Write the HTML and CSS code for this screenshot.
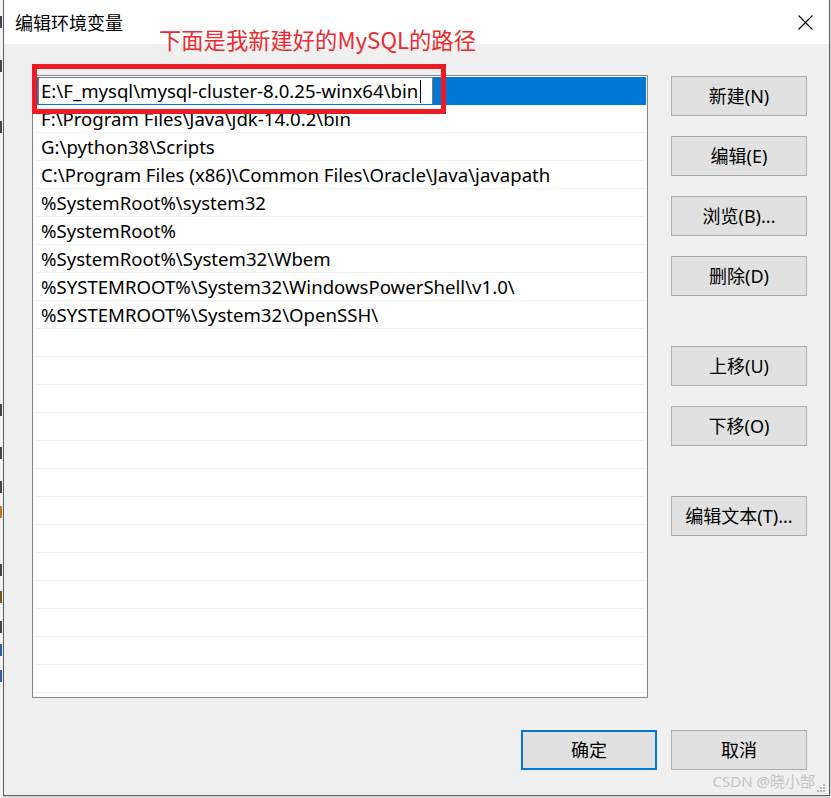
FILE: index.html
```html
<!DOCTYPE html>
<html lang="zh-CN">
<head>
<meta charset="utf-8">
<title>编辑环境变量</title>
<link rel="stylesheet" href="styles.css">
</head>
<body>
<div class="screen">
  <div class="behind">
    <span class="frag f1"></span>
    <span class="frag f2"></span>
    <span class="frag f3"></span>
    <span class="frag f4"></span>
    <span class="frag f5"></span>
    <span class="frag f6"></span>
    <span class="frag f7 orange"></span>
    <span class="frag f8"></span>
    <span class="frag f9 brown"></span>
    <span class="frag f10"></span>
    <span class="frag f11 blue"></span>
    <span class="frag f12 blue"></span>
  </div>
  <div class="dialog">
    <div class="titlebar">
      <span class="title">编辑环境变量</span>
      <svg class="close" width="15" height="15" viewBox="0 0 15 15"><path d="M0.5 0.5 L14.5 14.5 M14.5 0.5 L0.5 14.5" stroke="#000" stroke-width="1.1" fill="none"/></svg>
    </div>
    <div class="content">
      <div class="main">
        <div class="list">
          <div class="row selected"><div class="editbox"><span>E:\F_mysql\mysql-cluster-8.0.25-winx64\bin</span><span class="caret"></span></div></div>
          <div class="row">F:\Program Files\Java\jdk-14.0.2\bin</div>
          <div class="row">G:\python38\Scripts</div>
          <div class="row">C:\Program Files (x86)\Common Files\Oracle\Java\javapath</div>
          <div class="row">%SystemRoot%\system32</div>
          <div class="row">%SystemRoot%</div>
          <div class="row">%SystemRoot%\System32\Wbem</div>
          <div class="row">%SYSTEMROOT%\System32\WindowsPowerShell\v1.0\</div>
          <div class="row">%SYSTEMROOT%\System32\OpenSSH\</div>
          <div class="row"></div><div class="row"></div><div class="row"></div><div class="row"></div>
          <div class="row"></div><div class="row"></div><div class="row"></div><div class="row"></div>
          <div class="row"></div><div class="row"></div><div class="row"></div><div class="row"></div>
          <div class="row"></div><div class="row"></div>
        </div>
        <div class="buttons">
          <button class="btn">新建(N)</button>
          <button class="btn">编辑(E)</button>
          <button class="btn">浏览(B)...</button>
          <button class="btn">删除(D)</button>
          <button class="btn group">上移(U)</button>
          <button class="btn">下移(O)</button>
          <button class="btn group">编辑文本(T)...</button>
        </div>
      </div>
      <div class="footer">
        <button class="btn default">确定</button>
        <button class="btn">取消</button>
      </div>
      <div class="status">
        <span class="watermark">CSDN @晓小郜</span>
        <svg class="grip" width="9" height="9" viewBox="0 0 9 9">
          <rect x="6" y="0" width="2" height="2" fill="#b4b4b4"/>
          <rect x="3" y="3" width="2" height="2" fill="#b4b4b4"/>
          <rect x="6" y="3" width="2" height="2" fill="#b4b4b4"/>
          <rect x="0" y="6" width="2" height="2" fill="#b4b4b4"/>
          <rect x="3" y="6" width="2" height="2" fill="#b4b4b4"/>
          <rect x="6" y="6" width="2" height="2" fill="#b4b4b4"/>
        </svg>
      </div>
    </div>
  </div>
  <div class="annot-text">下面是我新建好的MySQL的路径</div>
  <div class="annot-box"></div>
</div>
</body>
</html>
```
FILE: styles.css
```css
* { box-sizing: border-box; }
html, body { margin: 0; padding: 0; }
body {
  width: 831px;
  height: 798px;
  overflow: hidden;
  background: #d6d6d6;
  font-family: "Noto Sans", "Noto Sans CJK SC", sans-serif;
  color: #000;
}
.screen {
  position: relative;
  display: flex;
  width: 831px;
  height: 798px;
}
.behind {
  position: relative;
  width: 3px;
  height: 798px;
  overflow: hidden;
  background: #f3f3f3;
  flex: none;
}
.frag {
  position: absolute;
  left: 0;
  width: 2px;
  height: 12px;
  background: #444;
}
.frag.orange { background: #c0781e; }
.frag.brown { background: #7a5520; }
.frag.blue { background: #2a5db0; }
.f1 { top: 16px; } .f2 { top: 60px; } .f3 { top: 121px; }
.f4 { top: 404px; } .f5 { top: 447px; } .f6 { top: 481px; }
.f7 { top: 506px; } .f8 { top: 564px; } .f9 { top: 591px; }
.f10 { top: 621px; } .f11 { top: 644px; } .f12 { top: 670px; }

.dialog {
  width: 827px;
  height: 796px;
  border: 1px solid #5c5c5c;
  border-top: none;
  background: #f0f0f0;
  display: flex;
  flex-direction: column;
  flex: none;
}
.titlebar {
  height: 44px;
  background: #fff;
  display: flex;
  align-items: center;
  justify-content: space-between;
  padding: 0 16px 0 11px;
  flex: none;
}
.title {
  font-family: "Noto Sans CJK SC", sans-serif;
  font-size: 18px;
  line-height: 20px;
  margin-top: -1px;
}
.close { display: block; }

.content {
  flex: 1;
  display: flex;
  flex-direction: column;
  padding: 31px 22px 0 28px;
}
.main {
  display: flex;
  gap: 23px;
}
.list {
  width: 616px;
  height: 623px;
  border: 1px solid #828790;
  background: #fff;
  padding: 1px 1px 0 1px;
  overflow: hidden;
}
.row {
  height: 28px;
  border-bottom: 1px solid #f0f0f0;
  margin: 0 1px;
  padding-left: 6px;
  padding-top: 1px;
  font-size: 18.6px;
  line-height: 26px;
  white-space: nowrap;
  overflow: hidden;
}
.row.selected {
  background: #0078d7;
  border-bottom-color: #0078d7;
  margin: 0;
  padding-left: 4px;
  padding-top: 0;
}
.editbox {
  width: 395px;
  height: 28px;
  background: #fff;
  border: 1px solid #7a7a7a;
  padding-left: 2px;
  display: flex;
  align-items: center;
  line-height: 26px;
}
.caret {
  display: inline-block;
  width: 1px;
  height: 23px;
  background: #000;
  margin-left: 2px;
}
.buttons {
  display: flex;
  flex-direction: column;
  gap: 20px;
  padding-top: 1px;
}
.btn {
  width: 136px;
  height: 40px;
  background: #e1e1e1;
  border: 1px solid #adadad;
  font-family: "Noto Sans", "Noto Sans CJK SC", sans-serif;
  font-size: 18px;
  color: #000;
  padding: 0;
  line-height: 20px;
}
.btn.group { margin-top: 30px; }
.btn.default { border: 2px solid #0078d7; }
.footer {
  display: flex;
  justify-content: flex-end;
  gap: 14px;
  margin-top: 32px;
}
.status {
  flex: 1;
  display: flex;
  justify-content: flex-end;
  align-items: flex-end;
  padding-bottom: 2px;
  margin-right: -19px;
}
.watermark {
  font-family: "Noto Sans", "Noto Sans CJK SC", sans-serif;
  font-size: 15px;
  line-height: 18px;
  color: #c4c4c4;
  margin-bottom: 3px;
  margin-right: 2px;
}
.grip { display: block; }

.annot-text {
  position: absolute;
  left: 159px;
  top: 24px;
  font-family: "Noto Sans CJK SC", sans-serif;
  font-size: 22.3px;
  line-height: 30px;
  color: #ee2a2f;
  white-space: nowrap;
}
.annot-box {
  position: absolute;
  left: 32px;
  top: 64px;
  width: 414px;
  height: 50px;
  border: 5px solid #ed1c24;
}
```
